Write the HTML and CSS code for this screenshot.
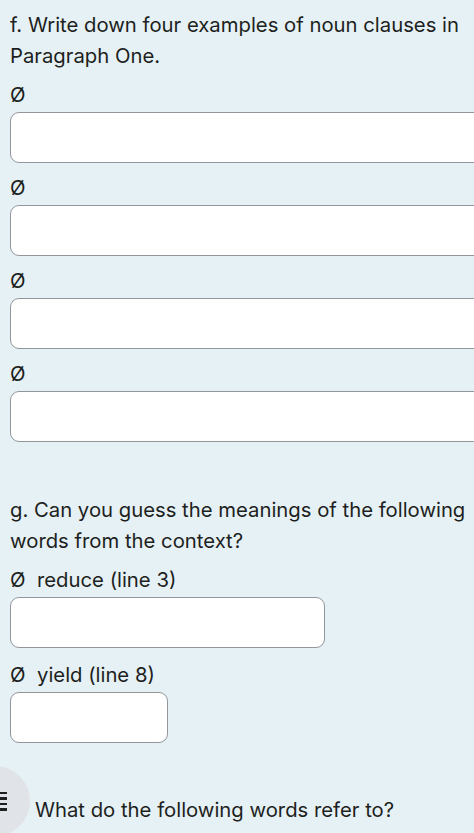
FILE: index.html
```html
<!DOCTYPE html>
<html lang="en">

<head>
    <meta charset="UTF-8" />
    <meta name="viewport" content="width=device-width, initial-scale=1.0" />
    <title>Noun clauses</title>
    <link rel="stylesheet" href="styles.css">
</head>

<body>
    <div class="page">
        <section class="question">
            <p class="prompt">f. Write down four examples of noun clauses in Paragraph One.</p>
            <div class="item">
                <p class="label"><span class="mark">Ø</span></p>
                <div class="answer wide"></div>
            </div>
            <div class="item">
                <p class="label"><span class="mark">Ø</span></p>
                <div class="answer wide"></div>
            </div>
            <div class="item">
                <p class="label"><span class="mark">Ø</span></p>
                <div class="answer wide"></div>
            </div>
            <div class="item">
                <p class="label"><span class="mark">Ø</span></p>
                <div class="answer wide"></div>
            </div>
        </section>

        <section class="question second">
            <p class="prompt">g. Can you guess the meanings of the following words from the context?</p>
            <div class="item">
                <p class="label"><span class="mark">Ø</span>reduce (line 3)</p>
                <div class="answer medium"></div>
            </div>
            <div class="item">
                <p class="label"><span class="mark">Ø</span>yield (line 8)</p>
                <div class="answer small"></div>
            </div>
        </section>

        <section class="question third">
            <p class="prompt indent">What do the following words refer to?</p>
        </section>
    </div>

    <div class="fab">
        <span></span>
        <span></span>
        <span></span>
        <span></span>
    </div>
</body>

</html>
```

FILE: styles.css
```css
* {
    margin: 0;
    padding: 0;
    box-sizing: border-box;
}

html,
body {
    height: 100%;
}

body {
    font-family: Inter, "Liberation Sans", sans-serif;
    font-size: 20.3px;
    color: #1d1f21;
    background-color: #e6f1f5;
    overflow: hidden;
    position: relative;
}

.page {
    padding: 9px 0 0 10px;
}

.prompt {
    line-height: 31px;
    width: 464px;
}

.item {
    margin-top: 12px;
}

.item + .item {
    margin-top: 13px;
}

.second .item + .item {
    margin-top: 15px;
}

.label {
    line-height: 24px;
}

.mark {
    display: inline-block;
    width: 27px;
}

.answer {
    margin-top: 5px;
    height: 51px;
    background-color: #fff;
    border: 1.5px solid #92969b;
    border-radius: 9px;
}

.wide {
    width: 490px;
}

.medium {
    width: 315px;
}

.small {
    width: 158px;
}

.second {
    margin-top: 52px;
}

.third {
    margin-top: 51px;
}

.indent {
    padding-left: 25px;
}

.fab {
    position: absolute;
    left: -40px;
    top: 766px;
    width: 70px;
    height: 70px;
    border-radius: 50%;
    background-color: #e0e3e7;
    display: flex;
    flex-direction: column;
    justify-content: center;
    align-items: flex-end;
    gap: 3px;
    padding-right: 23px;
}

.fab span {
    display: block;
    width: 7px;
    height: 2.5px;
    background-color: #1d1f21;
}
```
